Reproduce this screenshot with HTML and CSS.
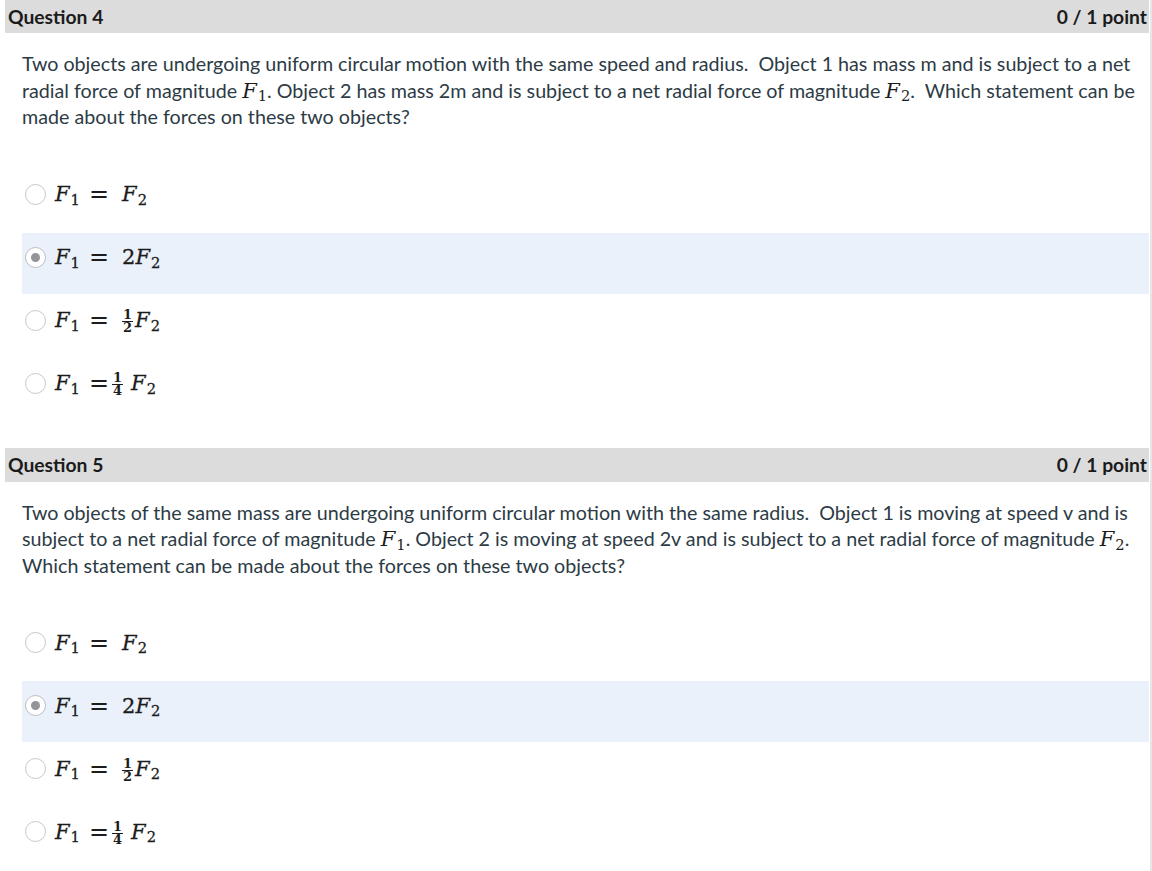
FILE: index.html
```html
<!DOCTYPE html>
<html lang="en">
<head>
<meta charset="utf-8">
<title>Quiz</title>
<link rel="stylesheet" href="styles.css">
</head>
<body>
<div class="page">
  <section class="question">
    <div class="q-header">
      <span class="q-title">Question 4</span>
      <span class="q-points">0 / 1 point</span>
    </div>
    <div class="q-text">
      Two objects are undergoing uniform circular motion with the same speed and radius.&nbsp; Object 1 has mass m and is subject to a net radial force of magnitude <span class="m"><i>F</i><sub>1</sub></span>. Object 2 has mass 2m and is subject to a net radial force of magnitude <span class="m"><i>F</i><sub>2</sub></span>.&nbsp; Which statement can be made about the forces on these two objects?
    </div>
    <div class="answers">
      <div class="answer">
        <span class="radio"></span>
        <span class="eq"><span class="m"><i>F</i><sub>1</sub></span><span class="eqs">=</span><span class="rhs"><span class="m"><i>F</i><sub>2</sub></span></span></span>
      </div>
      <div class="answer selected">
        <span class="radio checked"></span>
        <span class="eq"><span class="m"><i>F</i><sub>1</sub></span><span class="eqs">=</span><span class="rhs"><span class="num">2</span><span class="m"><i>F</i><sub>2</sub></span></span></span>
      </div>
      <div class="answer">
        <span class="radio"></span>
        <span class="eq"><span class="m"><i>F</i><sub>1</sub></span><span class="eqs">=</span><span class="rhs"><span class="frac"><span>1</span><span class="den">2</span></span><span class="m"><i>F</i><sub>2</sub></span></span></span>
      </div>
      <div class="answer">
        <span class="radio"></span>
        <span class="eq"><span class="m"><i>F</i><sub>1</sub></span><span class="eqs tight">=</span><span class="rhs"><span class="frac"><span>1</span><span class="den">4</span></span><span class="m gap"><i>F</i><sub>2</sub></span></span></span>
      </div>
    </div>
  </section>

  <section class="question">
    <div class="q-header">
      <span class="q-title">Question 5</span>
      <span class="q-points">0 / 1 point</span>
    </div>
    <div class="q-text">
      Two objects of the same mass are undergoing uniform circular motion with the same radius.&nbsp; Object 1 is moving at speed v and is subject to a net radial force of magnitude <span class="m"><i>F</i><sub>1</sub></span>. Object 2 is moving at speed 2v and is subject to a net radial force of magnitude <span class="m"><i>F</i><sub>2</sub></span>. Which statement can be made about the forces on these two objects?
    </div>
    <div class="answers">
      <div class="answer">
        <span class="radio"></span>
        <span class="eq"><span class="m"><i>F</i><sub>1</sub></span><span class="eqs">=</span><span class="rhs"><span class="m"><i>F</i><sub>2</sub></span></span></span>
      </div>
      <div class="answer selected">
        <span class="radio checked"></span>
        <span class="eq"><span class="m"><i>F</i><sub>1</sub></span><span class="eqs">=</span><span class="rhs"><span class="num">2</span><span class="m"><i>F</i><sub>2</sub></span></span></span>
      </div>
      <div class="answer">
        <span class="radio"></span>
        <span class="eq"><span class="m"><i>F</i><sub>1</sub></span><span class="eqs">=</span><span class="rhs"><span class="frac"><span>1</span><span class="den">2</span></span><span class="m"><i>F</i><sub>2</sub></span></span></span>
      </div>
      <div class="answer">
        <span class="radio"></span>
        <span class="eq"><span class="m"><i>F</i><sub>1</sub></span><span class="eqs tight">=</span><span class="rhs"><span class="frac"><span>1</span><span class="den">4</span></span><span class="m gap"><i>F</i><sub>2</sub></span></span></span>
      </div>
    </div>
  </section>
</div>
</body>
</html>
```

FILE: styles.css
```css
* { box-sizing: border-box; }

html, body {
  margin: 0;
  padding: 0;
  background: #ffffff;
}

body {
  font-family: Lato, "Open Sans", "Liberation Sans", sans-serif;
  color: #2d3b45;
  overflow: hidden;
}

.page {
  width: 1152px;
  height: 872px;
  border-right: 2px solid #e6e6e6;
  margin-top: -1px;
  padding-right: 1px;
}

.question {
  margin-bottom: 28px;
}

.q-header {
  margin-left: 5px;
  height: 34px;
  background: #dcdcdc;
  display: flex;
  align-items: center;
  justify-content: space-between;
  padding: 0 2px 0 3px;
  font-weight: 700;
  font-size: 19.3px;
  color: #1b1b1b;
}

.q-text {
  margin: 18px 0 0 22px;
  width: 1122px;
  font-size: 19.7px;
  line-height: 26.5px;
}

.answers {
  margin-top: 39px;
  padding-left: 22px;
}

.answer {
  height: 61px;
  margin-bottom: 2px;
  display: flex;
  align-items: flex-start;
  padding: 14px 0 0 3px;
}

.answer.selected {
  background: #eaf1fa;
}

.radio {
  width: 21px;
  height: 21px;
  border-radius: 50%;
  border: 1px solid #c5c9cc;
  background: #ffffff;
  flex: none;
  display: flex;
  align-items: center;
  justify-content: center;
}

.radio.checked {
  border-color: #b9bdc1;
}

.radio.checked::after {
  content: "";
  width: 9px;
  height: 9px;
  border-radius: 50%;
  background: #939497;
}

.eq {
  margin-left: 9px;
  display: flex;
  align-items: center;
  height: 21px;
  font-family: "DejaVu Serif", "Liberation Serif", serif;
  font-size: 21px;
  color: #1c1c1c;
  -webkit-text-stroke: 0.3px #1c1c1c;
}

.m {
  font-family: "DejaVu Serif", "Liberation Serif", serif;
  white-space: nowrap;
}

.m i {
  font-style: italic;
}

.q-text .m {
  font-size: 21px;
  color: #1c1c1c;
}

.m sub {
  font-style: normal;
  font-size: 0.7em;
  vertical-align: -0.25em;
  line-height: 0;
  margin-left: 1px;
}

.eqs {
  margin: 0 13px 0 9px;
  font-size: 24px;
  -webkit-text-stroke: 0;
}

.eqs.tight {
  margin-right: 3px;
}

.rhs {
  display: flex;
  align-items: center;
}

.frac {
  display: inline-flex;
  flex-direction: column;
  align-items: center;
  font-size: 13px;
  line-height: 12px;
  font-weight: 700;
  margin-right: 2px;
  margin-top: 3px;
  -webkit-text-stroke: 0;
}

.frac .den {
  border-top: 1px solid #1c1c1c;
  padding: 0 1px;
}

.m.gap {
  margin-left: 6px;
}
```
